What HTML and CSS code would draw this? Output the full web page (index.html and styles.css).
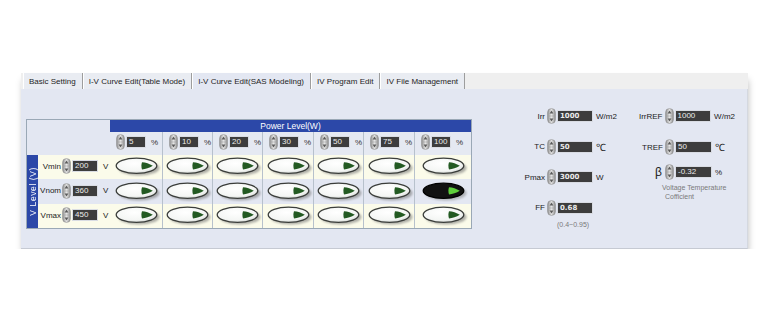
FILE: index.html
```html
<!DOCTYPE html>
<html>
<head>
<meta charset="utf-8">
<link rel="stylesheet" href="styles.css">
</head>
<body>
<svg class="defs" width="0" height="0" aria-hidden="true">
  <defs>
    <radialGradient id="wg" cx="45%" cy="35%" r="70%">
      <stop offset="0" stop-color="#ffffff"/>
      <stop offset="0.7" stop-color="#f4f6f4"/>
      <stop offset="1" stop-color="#c9cdc9"/>
    </radialGradient>
    <linearGradient id="sg" x1="0" x2="1" y1="0" y2="0">
      <stop offset="0" stop-color="#8e8e8e"/>
      <stop offset="0.5" stop-color="#e6e6e6"/>
      <stop offset="1" stop-color="#8e8e8e"/>
    </linearGradient>
    <filter id="blur" x="-20%" y="-40%" width="140%" height="180%">
      <feGaussianBlur stdDeviation="1"/>
    </filter>
    <symbol id="tog-off" viewBox="0 0 46 20">
      <ellipse cx="24" cy="11" rx="20.5" ry="7.6" fill="#6f6f6f" opacity="0.55" filter="url(#blur)"/>
      <ellipse cx="21.5" cy="8.8" rx="20.3" ry="7.6" fill="url(#wg)" stroke="#3a3d3a" stroke-width="1.3"/>
      <path d="M27 5.2 C30.5 5.2 34.5 6.8 37.8 8.8 C34.5 10.8 30.5 12.4 27 12.4 C26.2 10.4 26.2 7.2 27 5.2 Z" fill="#235a22"/>
    </symbol>
    <symbol id="tog-on" viewBox="0 0 46 20">
      <ellipse cx="24" cy="11" rx="20.5" ry="7.6" fill="#6f6f6f" opacity="0.45" filter="url(#blur)"/>
      <ellipse cx="21.5" cy="8.8" rx="20.3" ry="7.6" fill="#111111" stroke="#000" stroke-width="1.3"/>
      <path d="M27 5.2 C30.5 5.2 34.5 6.8 37.8 8.8 C34.5 10.8 30.5 12.4 27 12.4 C26.2 10.4 26.2 7.2 27 5.2 Z" fill="#5fcf3c"/>
    </symbol>
    <symbol id="spin" viewBox="0 0 9 16">
      <rect x="0.6" y="0.6" width="7.8" height="14.8" rx="3.9" fill="url(#sg)" stroke="#8a8a8a" stroke-width="0.6"/>
      <path d="M4.5 2.4 L6.4 5.6 L2.6 5.6 Z" fill="#5a5a5a"/>
      <path d="M4.5 13.6 L6.4 10.4 L2.6 10.4 Z" fill="#5a5a5a"/>
      <path d="M2 8 H7" stroke="#9a9a9a" stroke-width="0.5"/>
    </symbol>
  </defs>
</svg>

<div class="panel">
  <div class="tabs">
    <div class="tab">Basic Setting</div>
    <div class="tab">I-V Curve Edit(Table Mode)</div>
    <div class="tab active">I-V Curve Edit(SAS Modeling)</div>
    <div class="tab">IV Program Edit</div>
    <div class="tab">IV File Management</div>
  </div>
  <div class="body">
    <div class="grid">
      <div class="corner"></div>
      <div class="power">Power Level(W)</div>

      <div class="pct"><svg class="spin"><use href="#spin"/></svg><span class="num">5</span><span class="pu">%</span></div>
      <div class="pct"><svg class="spin"><use href="#spin"/></svg><span class="num">10</span><span class="pu">%</span></div>
      <div class="pct"><svg class="spin"><use href="#spin"/></svg><span class="num">20</span><span class="pu">%</span></div>
      <div class="pct"><svg class="spin"><use href="#spin"/></svg><span class="num">30</span><span class="pu">%</span></div>
      <div class="pct"><svg class="spin"><use href="#spin"/></svg><span class="num">50</span><span class="pu">%</span></div>
      <div class="pct"><svg class="spin"><use href="#spin"/></svg><span class="num">75</span><span class="pu">%</span></div>
      <div class="pct last"><svg class="spin"><use href="#spin"/></svg><span class="num">100</span><span class="pu">%</span></div>

      <div class="vbar"><span>V Level (V)</span></div>

      <div class="rlabel cream"><span class="rl">Vmin</span><svg class="spin"><use href="#spin"/></svg><span class="num rnum">200</span><span class="vu">V</span></div>
      <div class="cell cream"><svg class="tog"><use href="#tog-off"/></svg></div>
      <div class="cell cream"><svg class="tog"><use href="#tog-off"/></svg></div>
      <div class="cell cream"><svg class="tog"><use href="#tog-off"/></svg></div>
      <div class="cell cream"><svg class="tog"><use href="#tog-off"/></svg></div>
      <div class="cell cream"><svg class="tog"><use href="#tog-off"/></svg></div>
      <div class="cell cream"><svg class="tog"><use href="#tog-off"/></svg></div>
      <div class="cell cream last"><svg class="tog"><use href="#tog-off"/></svg></div>

      <div class="rlabel blue"><span class="rl">Vnom</span><svg class="spin"><use href="#spin"/></svg><span class="num rnum">360</span><span class="vu">V</span></div>
      <div class="cell blue"><svg class="tog"><use href="#tog-off"/></svg></div>
      <div class="cell blue"><svg class="tog"><use href="#tog-off"/></svg></div>
      <div class="cell blue"><svg class="tog"><use href="#tog-off"/></svg></div>
      <div class="cell blue"><svg class="tog"><use href="#tog-off"/></svg></div>
      <div class="cell blue"><svg class="tog"><use href="#tog-off"/></svg></div>
      <div class="cell blue"><svg class="tog"><use href="#tog-off"/></svg></div>
      <div class="cell blue last"><svg class="tog"><use href="#tog-on"/></svg></div>

      <div class="rlabel cream"><span class="rl">Vmax</span><svg class="spin"><use href="#spin"/></svg><span class="num rnum">450</span><span class="vu">V</span></div>
      <div class="cell cream"><svg class="tog"><use href="#tog-off"/></svg></div>
      <div class="cell cream"><svg class="tog"><use href="#tog-off"/></svg></div>
      <div class="cell cream"><svg class="tog"><use href="#tog-off"/></svg></div>
      <div class="cell cream"><svg class="tog"><use href="#tog-off"/></svg></div>
      <div class="cell cream"><svg class="tog"><use href="#tog-off"/></svg></div>
      <div class="cell cream"><svg class="tog"><use href="#tog-off"/></svg></div>
      <div class="cell cream last"><svg class="tog"><use href="#tog-off"/></svg></div>
    </div>

    <div class="params">
      <div class="pcol left">
        <div class="field"><span class="fl">Irr</span><svg class="spin"><use href="#spin"/></svg><span class="num fnum bold">1000</span><span class="fu">W/m2</span></div>
        <div class="field"><span class="fl">TC</span><svg class="spin"><use href="#spin"/></svg><span class="num fnum bold">50</span><span class="fu deg">℃</span></div>
        <div class="field"><span class="fl">Pmax</span><svg class="spin"><use href="#spin"/></svg><span class="num fnum bold">3000</span><span class="fu">W</span></div>
        <div class="group">
          <div class="field"><span class="fl">FF</span><svg class="spin"><use href="#spin"/></svg><span class="num fnum bold">0.68</span></div>
          <div class="cap ffcap">(0.4~0.95)</div>
        </div>
      </div>
      <div class="pcol right">
        <div class="field"><span class="fl">IrrREF</span><svg class="spin"><use href="#spin"/></svg><span class="num fnum wide">1000</span><span class="fu">W/m2</span></div>
        <div class="field"><span class="fl">TREF</span><svg class="spin"><use href="#spin"/></svg><span class="num fnum wide">50</span><span class="fu deg">℃</span></div>
        <div class="group beta-group">
          <div class="field"><span class="fl beta">β</span><svg class="spin"><use href="#spin"/></svg><span class="num fnum wide">-0.32</span><span class="fu">%</span></div>
          <div class="cap vcap">Voltage Temperature<br><span class="indent">Cofficient</span></div>
        </div>
      </div>
    </div>
  </div>
</div>
</body>
</html>
```

FILE: styles.css
```css
html, body {
  margin: 0;
  padding: 0;
  background: #ffffff;
}

body {
  font-family: "Liberation Sans", Arial, sans-serif;
  font-size: 8px;
  color: #222;
}

.defs {
  position: absolute;
  width: 0;
  height: 0;
}

.panel {
  margin: 73px 0 0 21px;
  width: 727px;
  box-shadow: 1px 6px 7px -1px rgba(0, 0, 0, 0.28);
}

.tabs {
  display: flex;
  height: 16px;
  background: #efefef;
  padding-left: 2px;
}

.tab {
  padding: 0 6px;
  line-height: 17px;
  background: #e9ecf2;
  border-right: 1px solid #9d9d9d;
  box-shadow: inset 1px 0 0 #ffffff;
  white-space: nowrap;
  color: #1e1e1e;
  font-size: 8px;
}

.tab.active {
  background: #e3e7f2;
}

.body {
  display: flex;
  align-items: flex-start;
  height: 160px;
  box-sizing: border-box;
  background: #e3e7f2;
  padding-left: 5px;
  border-bottom: 1px solid #c6cad3;
  border-right: 1px solid #d4d8e0;
}

/* ---------- table ---------- */
.grid {
  margin-top: 30px;
  border: 1px solid #9aa8b6;
  display: grid;
  grid-template-columns: 11px 72px 53px 50px 50px 51px 50px 51px 56px;
  grid-template-rows: 12px 23px 24px 25px 24px;
}

.corner {
  grid-column: 1 / 3;
  grid-row: 1 / 3;
}

.power {
  grid-column: 3 / 10;
  grid-row: 1;
  background: #2c48a8;
  color: #ffffff;
  text-align: center;
  line-height: 12px;
  font-size: 8.5px;
}

.pct {
  display: flex;
  align-items: center;
  padding: 0 0 3px 6px;
  border-right: 1px solid #b7c1cc;
  background: #e5e9f2;
}

.pct.last,
.cell.last {
  border-right: none;
}

.spin {
  width: 9px;
  height: 16px;
  flex: none;
}

.num {
  display: block;
  box-sizing: border-box;
  height: 12px;
  line-height: 10px;
  background: #3d3d3d;
  border: 1px solid #d9dce3;
  color: #ececec;
  padding-left: 2px;
  font-size: 8px;
}

.pct .num {
  width: 20px;
  margin-left: 1px;
}

.pu {
  margin-left: 5px;
  color: #333;
}

.vbar {
  grid-column: 1;
  grid-row: 3 / 6;
  background: #2c48a8;
  display: flex;
  align-items: center;
  justify-content: center;
}

.vbar span {
  writing-mode: vertical-rl;
  transform: rotate(180deg);
  color: #ffffff;
  font-size: 8.5px;
  letter-spacing: 0.6px;
  white-space: nowrap;
}

.cream {
  background: #fbfbea;
}

.blue {
  background: #e3e7f2;
}

.rlabel {
  display: flex;
  align-items: center;
  padding-bottom: 2px;
}

.rl {
  width: 24px;
  box-sizing: border-box;
  text-align: right;
  padding-right: 1px;
  color: #222;
}

.rnum {
  width: 26px;
  margin-left: 1px;
}

.vu {
  margin-left: 5px;
}

.cell {
  display: flex;
  align-items: center;
  justify-content: center;
  border-right: 1px solid #b7c1cc;
  padding-left: 3px;
}

.tog {
  width: 46px;
  height: 20px;
}

/* ---------- parameter fields ---------- */
.params {
  display: flex;
  margin-left: 35px;
  padding-top: 20px;
}

.pcol {
  display: flex;
  flex-direction: column;
}

.pcol.left {
  width: 118px;
  gap: 16.5px;
}

.pcol.right {
  width: 110px;
}

.field {
  display: flex;
  align-items: center;
  height: 14px;
}

.fl {
  width: 40px;
  box-sizing: border-box;
  text-align: right;
  padding-right: 2px;
  color: #222;
}

.fnum {
  width: 36px;
  margin-left: 1px;
}

.fnum.wide {
  width: 37px;
}

.bold {
  font-family: "DejaVu Sans", sans-serif;
  font-weight: bold;
  font-size: 7px;
}

.fu {
  margin-left: 3px;
  color: #222;
}

.fu.deg {
  font-size: 10px;
}

.right .field + .field {
  margin-top: 17px;
}

.beta-group {
  margin-top: 11px;
}

.beta {
  font-size: 12px;
  padding-right: 3px;
}

.cap {
  color: #7a7a7a;
  font-size: 7px;
  line-height: 9px;
}

.ffcap {
  margin: 5px 0 0 50px;
}

.vcap {
  margin: 4px 0 0 37px;
  white-space: nowrap;
}

.indent {
  padding-left: 3px;
}
```
